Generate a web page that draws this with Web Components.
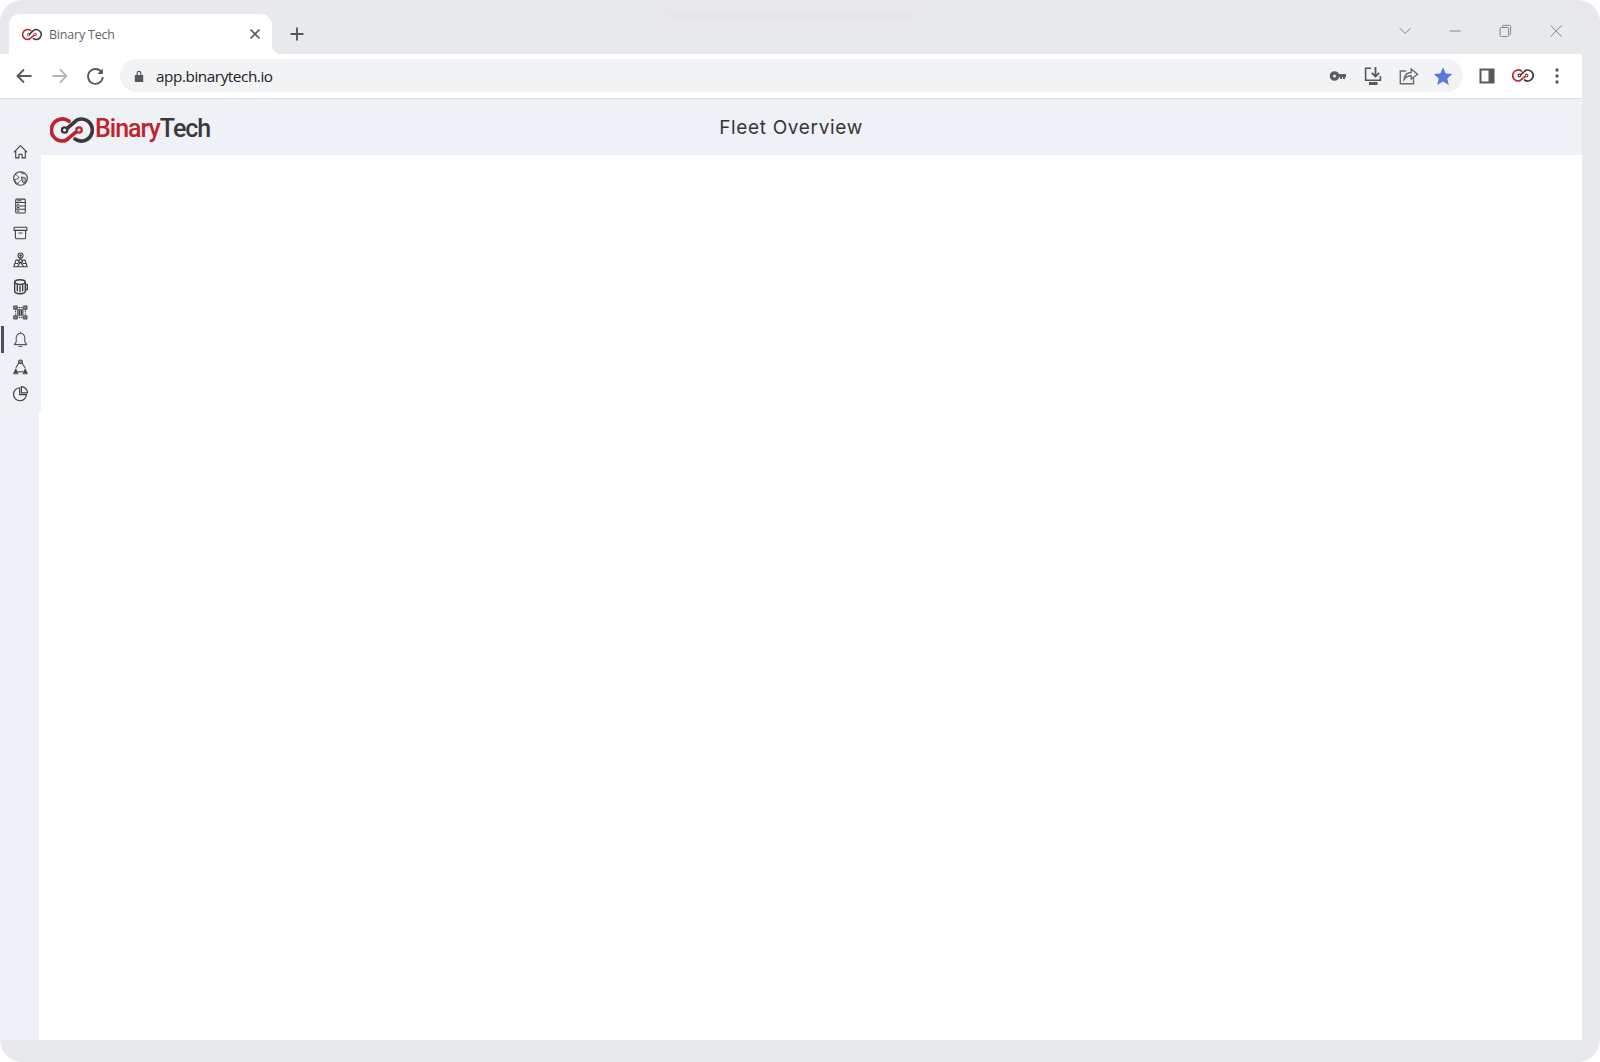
<!doctype html>
<html><head><meta charset="utf-8"><title>Binary Tech</title>
<style>html,body{margin:0;padding:0;background:#fff;height:100%;overflow:hidden}</style>
</head><body>
<browser-frame>
  <tab-strip slot="strip"></tab-strip>
  <tool-bar slot="toolbar"></tool-bar>
  <app-header slot="header"></app-header>
  <side-rail slot="rail"></side-rail>
</browser-frame>
<script>
function logo(s,w,h){return `<svg width="${w}" height="${h}" viewBox="0 0 44 28" fill="none" stroke-linecap="round">
<path d="M19 5.2A11 11 0 1 0 12.5 25C15 25 17 24 18.5 22.2L25.5 16.4" stroke="#c0232c" stroke-width="${s}"/>
<path d="M25 23A11 11 0 1 0 31.5 3C28.5 3 26.5 4 25 5.6L18 11.6" stroke="#3a3a3c" stroke-width="${s}"/>
<circle cx="14.6" cy="14" r="2.7" stroke="#3a3a3c" stroke-width="${s*.62}"/><circle cx="29" cy="14" r="2.7" stroke="#c0232c" stroke-width="${s*.62}"/></svg>`}
function def(name,css,html){customElements.define(name,class extends HTMLElement{constructor(){super();this.attachShadow({mode:'open'}).innerHTML=`<style>${css}</style>${html}`}})}

def('browser-frame',`
:host{display:flex;flex-direction:column;position:relative;width:1600px;height:1062px;box-sizing:border-box;background:#e8e9ec;border-radius:22px;padding:0 18px 22px 0;overflow:hidden}
.main{flex:1;display:flex;flex-direction:column;background:#fff;min-height:0}
.body{flex:1;display:flex;min-height:0}
.page{flex:1;background:#fff}
`,`<slot name="strip"></slot><slot name="toolbar"></slot>
<div class="main"><slot name="header"></slot><div class="body"><slot name="rail"></slot><div class="page"></div></div></div>`);

def('tab-strip',`
:host{display:flex;align-items:flex-end;height:54px;position:relative;font-family:"Open Sans","Noto Sans",sans-serif}
.tab{margin-left:9px;width:263px;height:40px;box-sizing:border-box;background:#fff;border-radius:11px 11px 0 0;display:flex;align-items:center;padding:0 10.5px 0 13px;gap:7px;font-size:12.4px;color:#5f6368;position:relative}
.tab:after{content:"";position:absolute;right:-9px;bottom:0;width:9px;height:9px;background:radial-gradient(circle at 100% 0,transparent 9px,#fff 9.5px)}
.tab span{flex:1;letter-spacing:-.15px}
.x,.plus{display:block}
.plus{margin:0 0 12px 17px}
.grip{position:absolute;left:665px;top:14px;width:250px;height:3px;background:#e3e4e7;filter:blur(2.5px);border-radius:4px}
.ctl{margin-left:auto;display:flex;gap:0;align-self:flex-start;margin-top:21px;margin-right:1px}
.ctl svg{display:block;width:50.3px;height:20px}
`,`<div class="grip"></div>
<div class="tab">${logo(3.4,20,13)}<span>Binary Tech</span>
<svg class="x" width="14" height="14" viewBox="0 0 14 14" stroke="#55585c" stroke-width="1.7"><path d="M2.5 2.5 11.5 11.5M11.5 2.5 2.5 11.5"/></svg></div>
<svg class="plus" width="16" height="16" viewBox="0 0 16 16" stroke="#55585c" stroke-width="1.9"><path d="M8 1.5V14.5M1.5 8H14.5"/></svg>
<div class="ctl">
<svg viewBox="0 0 50 20" fill="none" stroke="#85878b" stroke-width="1"><path d="M19.5 7 25 12.5 30.5 7"/></svg>
<svg viewBox="0 0 50 20" fill="none" stroke="#85878b" stroke-width="1"><path d="M19.5 10H30.5"/></svg>
<svg viewBox="0 0 50 20" fill="none" stroke="#85878b" stroke-width="1"><rect x="20" y="6.5" width="8.5" height="9" rx="1.2"/><path d="M22.5 6.5V5.5A1.2 1.2 0 0 1 23.7 4.3H29A1.5 1.5 0 0 1 30.5 5.8V12A1.2 1.2 0 0 1 29 13.5H28.5"/></svg>
<svg viewBox="0 0 50 20" fill="none" stroke="#85878b" stroke-width="1"><path d="M19.5 4.5 30.5 15.5M30.5 4.5 19.5 15.5"/></svg>
</div>`);

def('tool-bar',`
:host{display:flex;align-items:center;height:45px;box-sizing:border-box;background:#fff;border-bottom:1.5px solid #dcdfe3;font-family:"Open Sans","Noto Sans",sans-serif;padding-bottom:1px}
.nav{display:flex;width:120px;padding-left:7px;box-sizing:border-box;flex:none}
.nav svg{width:35px;height:22px;display:block}
.omni{flex:1;height:33px;background:#f1f3f4;border-radius:17px;display:flex;align-items:center;padding:0 9px 0 12px}
.url{flex:1;margin-left:10px;font-size:15.3px;color:#202124;letter-spacing:-.44px}
.omni svg,.end svg{display:block}
.omni .i{margin-left:12px}
.omni .key{margin-left:0}
.omni .dl{margin-left:15px}
.omni .sh{margin-left:13px}
.end{display:flex;align-items:center;width:119px;flex:none;box-sizing:border-box;padding-left:16px;gap:14px}
`,`<div class="nav">
<svg viewBox="0 0 35 22" fill="none" stroke="#55585c" stroke-width="1.8"><path d="M24.5 11H10.5M17 4.5 10.5 11 17 17.5"/></svg>
<svg viewBox="0 0 35 22" fill="none" stroke="#b4b6b9" stroke-width="1.8"><path d="M10.5 11H24.5M18 4.5 24.5 11 18 17.5"/></svg>
<svg viewBox="-1 0 35 22" fill="none" stroke="#55585c" stroke-width="1.8"><path d="M23.6 7.3A7.4 7.4 0 1 0 24.8 12"/><path d="M24.8 3.6V9H19.4Z" fill="#55585c" stroke="none"/></svg>
</div>
<div class="omni">
<svg width="14" height="14" viewBox="0 0 14 14"><path d="M2.8 6H11.2V13H2.8Z M4.6 6V4.2A2.4 2.4 0 0 1 9.4 4.2V6H8.2V4.2A1.2 1.2 0 0 0 5.8 4.2V6Z" fill="#55585c"/></svg>
<div class="url">app.binarytech.io</div>
<svg class="i key" width="18" height="20" viewBox="0 0 18 20"><path d="M5.5 5.2A4.8 4.8 0 1 1 5.5 14.8 4.8 4.8 0 0 1 5.5 5.2ZM5.5 8.5A1.5 1.5 0 1 0 5.5 11.5 1.5 1.5 0 0 0 5.5 8.5Z" fill="#5a5d61" fill-rule="evenodd"/><path d="M9.5 8H17V11.2H16V13H14V11.2H13V13H11V11.2H9.5Z" fill="#5a5d61"/></svg>
<svg class="i dl" width="22" height="22" viewBox="0 0 22 22" fill="none" stroke="#55585c" stroke-width="1.6"><path d="M9 3.2H3.6V15.2H18.4V11"/><path d="M13.5 2V11M9.8 7.8 13.5 11.5 17.2 7.8" stroke-width="1.8"/><path d="M7 18.5H15.5" stroke-width="3"/></svg>
<svg class="i sh" width="23" height="22" viewBox="0 0 23 22" fill="none" stroke="#6a6d71" stroke-width="1.4"><path d="M9 6H3.3V18.7H16.5V13"/><path d="M7 14.5C7.5 10 10.5 7.7 14.2 7.5V4L20.5 9.3 14.2 14V10.8C11.5 10.8 9 11.8 7 14.5Z"/></svg>
<svg class="i" width="22" height="22" viewBox="0 0 22 22"><path d="M11 2.3 13.7 8.4 20.3 9.1 15.3 13.5 16.8 20 11 16.6 5.2 20 6.7 13.5 1.7 9.1 8.3 8.4Z" fill="#5b78e0"/></svg>
</div>
<div class="end">
<svg width="16" height="16" viewBox="0 0 16 16" style="flex:none"><path d="M.5 .5H15.5V15.5H.5Z M2.5 2.5V13.5H9.5V2.5Z" fill="#55585c" fill-rule="evenodd"/></svg>
<span style="display:flex;margin-left:2.5px">${logo(3.4,22,15)}</span>
<svg width="14" height="16" viewBox="0 0 14 16" fill="#55585c" style="margin-left:2.5px"><circle cx="7" cy="2" r="1.7"/><circle cx="7" cy="8" r="1.7"/><circle cx="7" cy="14" r="1.7"/></svg>
</div>`);

def('app-header',`
:host{display:flex;align-items:center;height:56px;background:#eef1f5;position:relative;justify-content:center;box-sizing:border-box;font-family:"Inter","Lato",sans-serif}
.brand{position:absolute;left:49.5px;top:15px;display:flex;align-items:center;gap:1.5px;font-family:"Roboto",sans-serif;font-weight:500;font-size:25px;letter-spacing:-1px;line-height:28px}
.brand svg{margin-top:2px}
.b{color:#c0232c}.t{color:#3a3a3c}
h1{margin:0;font-size:19px;font-weight:400;color:#35363a;letter-spacing:.66px;position:relative;top:0}
`,`<div class="brand">${logo(3.7,44,28)}<div><span class="b">Binary</span><span class="t">Tech</span></div></div><h1>Fleet Overview</h1>`);

const ic={
home:`<path d="M2 8.5 8 2.5 14 8.5M3.5 7.5V14H6.5V10.5H9.5V14H12.5V7.5"/>`,
globe:`<circle cx="8" cy="8" r="6.4"/><path d="M3.2 4.2C5 5 6 6 6.6 7.5 5.4 8.4 4 9 2.4 9.2 3 10.8 4 12 5.6 13 6.2 11.4 6.8 10.6 7.8 10M8 1.8C8.6 3.2 10 4 11.5 3.4M9.2 6.6 12 7.2 13.6 9.8 11 12.6 9.4 10Z" stroke-width=".8"/><path d="M9.2 6.6 12 7.2 13.6 9.8 11 12.6 9.4 10Z" fill="#3c3f43" fill-opacity=".35" stroke="none"/>`,
rack:`<rect x="3.5" y="2" width="9" height="13" rx="1"/><path d="M3.5 5.2H12.5M3.5 8.4H12.5M3.5 11.6H12.5M5.2 3.6H8.5M5.2 6.8H6.5M5.2 10H6.5M5.2 13.3H6.5"/>`,
box:`<path d="M2 3H14V6H2ZM3.2 6V12.8A1 1 0 0 0 4.2 13.8H11.8A1 1 0 0 0 12.8 12.8V6M6.5 8.5H9.5"/>`,
site:`<circle cx="8" cy="4.2" r="2.4"/><circle cx="8" cy="4.2" r=".7" fill="#3c3f43"/><path d="M8 6.6 6 10.5H10ZM1.7 14.8 3.7 8.6H6M14.3 14.8 12.3 8.6H10M1.7 14.8H14.3M5 14.8 8 10.5 11 14.8M3.2 11.8H5.6M10.4 11.8H12.8"/>`,
drum:`<ellipse cx="7.5" cy="3.8" rx="5" ry="2.2" stroke-width="1.4"/><path d="M2.5 3.8V12.3C2.5 13.8 4.7 14.8 7.5 14.8S12.5 13.8 12.5 12.3V3.8M5 7V12M7.5 7.5V12.8M10 7V12M12.5 6H14.4V11H12.5" stroke-width="1.3"/>`,
scan:`<rect x="1.8" y="1.8" width="3.2" height="3.2" fill="#7a7d82" stroke-width=".7"/><rect x="11" y="1.8" width="3.2" height="3.2" fill="#7a7d82" stroke-width=".7"/><rect x="1.8" y="11" width="3.2" height="3.2" fill="#7a7d82" stroke-width=".7"/><rect x="11" y="11" width="3.2" height="3.2" fill="#7a7d82" stroke-width=".7"/><path d="M5 3.4H11M5 12.6H11M3.4 5V11M12.6 5V11" stroke-dasharray="1 .6" stroke-linecap="butt"/><rect x="5.6" y="5.4" width="4.8" height="5.2" fill="#9a9da1" stroke-width=".7"/><path d="M7 5.4V10.6M9 5.4V10.6" stroke-width=".9" stroke-linecap="butt"/>`,
bell:`<path d="M8 2.2A4 4 0 0 0 4 6.2V10L2.2 12.8H13.8L12 10V6.2A4 4 0 0 0 8 2.2ZM8 1V2.2M6.7 14.6H9.3" stroke="#55585c"/>`,
org:`<circle cx="8" cy="3.6" r="1.8" fill="#3c3f43" fill-opacity=".5"/><path d="M6.4 5 3.8 9M9.6 5 12.2 9M5.8 13H10.2" stroke-dasharray="1.4 .7"/><path d="M1.5 14.6 3.6 10 5.7 14.6ZM10.3 14.6 12.4 10 14.5 14.6Z" fill="#3c3f43" stroke-width=".6"/>`,
pie:`<path d="M7.2 2.6A6.1 6.1 0 1 0 13.6 9H7.2Z" stroke-width="1.1"/><path d="M8.8 1.6A5.8 5.8 0 0 1 14.6 7.4H8.8Z" stroke-width="1.1"/>`
};
def('side-rail',`
:host{display:block;width:38.5px;flex:none;background:#eef1f5;margin-top:-15.5px;position:relative}
.rail{width:40.5px;height:271px;box-sizing:border-box;background:#eef1f5;display:flex;flex-direction:column;box-shadow:0 0 1px rgba(255,255,255,.7)}
.it{height:26.85px;flex:none;display:flex;align-items:center;justify-content:center;position:relative;top:-1px}
.it svg{display:block;width:17px;height:17px;fill:none;stroke:#3c3f43;stroke-width:1;stroke-linejoin:round;stroke-linecap:round}
.on:before{content:"";position:absolute;left:1px;top:0;bottom:0;width:3px;background:#4d5258}
`,`<div class="rail">${Object.keys(ic).map(k=>`<div class="it${k=='bell'?' on':''}"><svg viewBox="0 0 16 16">${ic[k]}</svg></div>`).join('')}</div>`);
</script>
</body></html>
